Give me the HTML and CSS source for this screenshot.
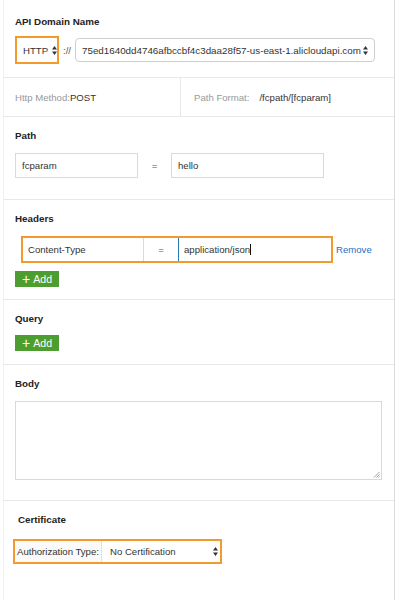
FILE: index.html
```html
<!DOCTYPE html>
<html lang="en">
<head>
    <meta charset="UTF-8">
    <title>API Debug</title>
    <link rel="stylesheet" href="styles.css">
</head>
<body>
    <div class="panel">
        <!-- Domain -->
        <div class="block block-domain">
            <h4>API Domain Name</h4>
            <div class="domain-row">
                <div class="proto">
                    <span>HTTP</span>
                    <svg class="arrows" width="5" height="9" viewBox="0 0 5 9"><path d="M2.5 0 L5 3.5 L0 3.5 Z M0 5.5 L5 5.5 L2.5 9 Z" fill="#333"/></svg>
                </div>
                <span class="scheme">://</span>
                <div class="domain-select">
                    <span>75ed1640dd4746afbccbf4c3daa28f57-us-east-1.alicloudapi.com</span>
                    <svg class="arrows" width="5" height="9" viewBox="0 0 5 9"><path d="M2.5 0 L5 3.5 L0 3.5 Z M0 5.5 L5 5.5 L2.5 9 Z" fill="#333"/></svg>
                </div>
            </div>
        </div>

        <!-- Method / path format -->
        <div class="info-row">
            <div class="info-cell"><span class="muted">Http Method:</span>POST</div>
            <div class="info-cell info-right"><span class="muted">Path Format:</span><span class="path-val">/fcpath/[fcparam]</span></div>
        </div>

        <!-- Path -->
        <div class="block block-path">
            <h4>Path</h4>
            <div class="kv">
                <div class="field field-key">fcparam</div>
                <span class="eq">=</span>
                <div class="field field-val">hello</div>
            </div>
        </div>

        <!-- Headers -->
        <div class="block block-headers">
            <h4>Headers</h4>
            <div class="header-line">
                <div class="header-box">
                    <div class="hfield hkey">Content-Type</div>
                    <div class="heq">=</div>
                    <div class="hfield hval">application/json<span class="caret"></span></div>
                </div>
                <a class="remove">Remove</a>
            </div>
            <button class="add-btn"><span class="plus">+</span>Add</button>
        </div>

        <!-- Query -->
        <div class="block block-query">
            <h4>Query</h4>
            <button class="add-btn"><span class="plus">+</span>Add</button>
        </div>

        <!-- Body -->
        <div class="block block-body">
            <h4>Body</h4>
            <div class="body-area">
                <svg class="grip" width="7" height="7" viewBox="0 0 7 7"><path d="M6.5 1 L1 6.5 M6.5 3.5 L3.5 6.5 M6.5 5.5 L5.5 6.5" stroke="#888" stroke-width="0.8"/></svg>
            </div>
        </div>

        <!-- Certificate -->
        <div class="block block-cert">
            <h4>Certificate</h4>
            <div class="auth-box">
                <div class="auth-label">Authorization Type:</div>
                <div class="auth-select">
                    <span>No Certification</span>
                    <svg class="arrows" width="5" height="9" viewBox="0 0 5 9"><path d="M2.5 0 L5 3.5 L0 3.5 Z M0 5.5 L5 5.5 L2.5 9 Z" fill="#333"/></svg>
                </div>
            </div>
        </div>
    </div>
</body>
</html>
```

FILE: styles.css
```css
body {
    margin: 0;
    font-family: "Liberation Sans", Arial, sans-serif;
    font-size: 9.6px;
    color: #333;
    background-color: #fff;
}

.panel {
    margin-left: 3px;
    width: 390px;
    height: 600px;
    border-left: 1px solid #eef0f2;
    border-right: 1px solid #dcdcdc;
    background-color: #fff;
}

h4 {
    margin: 0;
    font-size: 9.8px;
    line-height: 14px;
    font-weight: bold;
    color: #222;
}

.block {
    padding: 12px 11px 0 11px;
    border-bottom: 1px solid #e8e8e8;
    box-sizing: border-box;
}

.arrows {
    display: block;
    flex-shrink: 0;
}

/* Domain */
.block-domain {
    height: 78px;
    padding-top: 15px;
}

.domain-row {
    display: flex;
    align-items: center;
    margin-top: 7px;
}

.proto {
    width: 44px;
    height: 28px;
    border: 2px solid #f39a2e;
    box-sizing: border-box;
    display: flex;
    align-items: center;
    padding-left: 6px;
    gap: 4px;
}

.scheme {
    margin: 0 4px 0 4px;
    color: #555;
}

.domain-select {
    width: 300px;
    height: 24px;
    border: 1px solid #cfcfcf;
    border-radius: 4px;
    box-sizing: border-box;
    display: flex;
    align-items: center;
    justify-content: space-between;
    padding: 0 6px 0 6px;
    font-size: 9.8px;
}

/* Info row */
.info-row {
    display: flex;
    height: 39px;
    border-bottom: 1px solid #e8e8e8;
    box-sizing: border-box;
}

.info-cell {
    display: flex;
    align-items: center;
    padding-left: 11px;
    width: 176px;
    box-sizing: border-box;
}

.info-right {
    flex: 1;
    border-left: 1px solid #e8e8e8;
    padding-left: 13px;
}

.muted {
    color: #999;
}

.path-val {
    margin-left: 10px;
}

/* Path */
.block-path {
    height: 83px;
}

.kv {
    display: flex;
    align-items: center;
    margin-top: 10px;
}

.field {
    height: 25px;
    border: 1px solid #d9d9d9;
    box-sizing: border-box;
    display: flex;
    align-items: center;
    padding-left: 6px;
}

.field-key {
    width: 123px;
}

.field-val {
    width: 153px;
}

.eq {
    width: 33px;
    text-align: center;
    color: #555;
}

/* Headers */
.block-headers {
    height: 100px;
}

.header-line {
    display: flex;
    align-items: center;
    margin-top: 10px;
    padding-left: 6px;
}

.header-box {
    width: 312px;
    height: 27px;
    border: 2px solid #f39a2e;
    box-sizing: border-box;
    display: flex;
}

.hfield {
    display: flex;
    align-items: center;
    padding-left: 5px;
}

.hkey {
    width: 121px;
    border-right: 1px solid #d9d9d9;
    box-sizing: border-box;
}

.heq {
    width: 34px;
    display: flex;
    align-items: center;
    justify-content: center;
    color: #555;
}

.hval {
    flex: 1;
    border-left: 1px solid #2a7ab8;
}

.caret {
    display: inline-block;
    width: 1px;
    height: 11px;
    background-color: #111;
}

.remove {
    margin-left: 3px;
    color: #1f6fc5;
}

.add-btn {
    display: flex;
    align-items: center;
    gap: 3px;
    margin-top: 8px;
    width: 44px;
    height: 16px;
    padding: 0 0 0 7px;
    border: none;
    background-color: #4e9d31;
    color: #fff;
    font-family: inherit;
    font-size: 10.6px;
}

.plus {
    font-size: 14px;
    line-height: 14px;
    font-weight: 300;
}

/* Query */
.block-query {
    height: 65px;
}

.block-query .add-btn {
    margin-top: 9px;
}

/* Body */
.block-body {
    height: 136px;
}

.body-area {
    position: relative;
    margin-top: 10px;
    width: 367px;
    height: 79px;
    border: 1px solid #d9d9d9;
    box-sizing: border-box;
}

.grip {
    position: absolute;
    right: 1px;
    bottom: 1px;
}

/* Certificate */
.block-cert {
    border-bottom: none;
    padding-left: 14px;
}

.auth-box {
    display: flex;
    margin-top: 12px;
    margin-left: -5px;
    width: 209px;
    height: 25px;
    border: 2px solid #f39a2e;
    box-sizing: border-box;
}

.auth-label {
    display: flex;
    align-items: center;
    padding-left: 2px;
    width: 87px;
    background-color: #fafafa;
    border-right: 1px solid #e2e2e2;
    box-sizing: border-box;
}

.auth-select {
    flex: 1;
    display: flex;
    align-items: center;
    justify-content: space-between;
    padding: 0 2px 0 8px;
}
```
